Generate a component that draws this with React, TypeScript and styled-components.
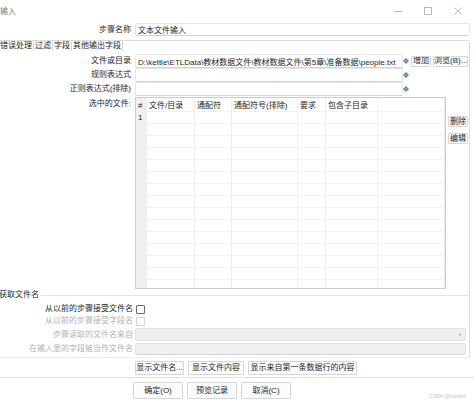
import styled, { createGlobalStyle } from 'styled-components';

const GlobalStyle = createGlobalStyle`
  html, body { margin: 0; padding: 0; background: #fff; }
  body {
    font-family: "Liberation Sans", "Noto Sans CJK SC", sans-serif;
    font-size: 8px;
    color: #1f1f1f;
  }
  * { box-sizing: border-box; }
`;

const columns = ['#', '文件/目录', '通配符', '通配符号(排除)', '要求', '包含子目录', ''];
const rows = Array.from({ length: 16 }, (_, i) => (i === 0 ? '1' : ''));

function App() {
  return (
    <Window>
      <GlobalStyle />
      <TitleBar>
        <Title>输入</Title>
        <Controls>
          <svg width="10" height="10" viewBox="0 0 10 10">
            <line x1="1" y1="5.5" x2="9" y2="5.5" stroke="#999" strokeWidth="0.7" />
          </svg>
          <svg width="10" height="10" viewBox="0 0 10 10">
            <rect x="1.5" y="1.5" width="7" height="7" fill="none" stroke="#999" strokeWidth="0.7" />
          </svg>
          <svg width="10" height="10" viewBox="0 0 10 10">
            <path d="M1.5 1.5 L8.5 8.5 M8.5 1.5 L1.5 8.5" stroke="#999" strokeWidth="0.7" />
          </svg>
        </Controls>
      </TitleBar>

      <StepRow>
        <Label>步骤名称</Label>
        <TextBox $width={335}>文本文件输入</TextBox>
      </StepRow>

      <Folder>
        <TabBar>
          <Tab $first>错误处理</Tab>
          <Tab>过滤</Tab>
          <Tab>字段</Tab>
          <Tab>其他输出字段</Tab>
        </TabBar>

        <FormRow $top={3}>
          <Label>文件或目录</Label>
          <TextBox $width={268}>D:\kettle\ETLData\教材数据文件\教材数据文件\第5章\准备数据\people.txt</TextBox>
          <Gem />
          <ButtonGroup>
            <Btn $width={20}>增加</Btn>
            <Btn $width={35}>浏览(B)...</Btn>
          </ButtonGroup>
        </FormRow>
        <FormRow>
          <Label>规则表达式</Label>
          <TextBox $width={268} />
          <Gem />
        </FormRow>
        <FormRow>
          <Label>正则表达式(排除)</Label>
          <TextBox $width={268} />
          <Gem />
        </FormRow>

        <TableRow>
          <TableLabel>选中的文件:</TableLabel>
          <Table>
            {columns.map((c, i) => (
              <Cell key={'h' + i} $index={i === 0} $head>
                {c}
              </Cell>
            ))}
            {rows.map((r, ri) =>
              columns.map((_, ci) => (
                <Cell key={ri + '-' + ci} $index={ci === 0}>
                  {ci === 0 ? r : ''}
                </Cell>
              ))
            )}
          </Table>
          <SideButtons>
            <Btn $width={20}>删除</Btn>
            <Btn $width={20}>编辑</Btn>
          </SideButtons>
        </TableRow>

        <Group>
          <GroupHead>
            <Legend>获取文件名</Legend>
            <GroupLine />
          </GroupHead>
          <GroupBody>
            <CheckRow>
              <GroupLabel>从以前的步骤接受文件名</GroupLabel>
              <Checkbox />
            </CheckRow>
            <CheckRow>
              <GroupLabel $disabled>从以前的步骤接受字段名</GroupLabel>
              <Checkbox $disabled />
            </CheckRow>
            <ComboRow>
              <GroupLabel $disabled>步骤读取的文件名来自</GroupLabel>
              <Combo>
                <Arrow>▼</Arrow>
              </Combo>
            </ComboRow>
            <InputRow>
              <GroupLabel $disabled>在输入里的字段被当作文件名</GroupLabel>
              <TextBox $width={331} $disabled />
            </InputRow>
          </GroupBody>
        </Group>
      </Folder>

      <ActionRow>
        <Btn $width={49} $height={14}>显示文件名...</Btn>
        <Btn $width={56} $height={14}>显示文件内容</Btn>
        <Btn $width={109} $height={14}>显示来自第一条数据行的内容</Btn>
      </ActionRow>
      <Separator />
      <Footer>
        <Btn $width={50} $height={17}>确定(O)</Btn>
        <Btn $width={50} $height={17}>预览记录</Btn>
        <Btn $width={50} $height={17}>取消(C)</Btn>
      </Footer>
      <Watermark>CSDN @fuzhimi</Watermark>
    </Window>
  );
}

export default App;

const Window = styled.div`
  position: relative;
  width: 474px;
  height: 403px;
  overflow: hidden;
  background: #fff;
`;

const TitleBar = styled.div`
  height: 22px;
  display: flex;
  align-items: center;
  justify-content: space-between;
`;

const Title = styled.span`
  color: #777;
  line-height: 10px;
  margin-top: 1px;
`;

const Controls = styled.div`
  display: flex;
  gap: 20px;
  padding-right: 11px;
`;

const StepRow = styled.div`
  display: flex;
  align-items: center;
  height: 13px;
  margin-top: 1px;
`;

const Label = styled.span<{ $disabled?: boolean }>`
  width: 131px;
  margin-right: 4px;
  flex-shrink: 0;
  text-align: right;
  white-space: nowrap;
  line-height: 10px;
  color: ${(p) => (p.$disabled ? '#b3b3b3' : '#262626')};
`;

const TextBox = styled.div<{ $width: number; $disabled?: boolean }>`
  width: ${(p) => p.$width}px;
  height: 100%;
  flex-shrink: 0;
  border: 1px solid #e6e6e6;
  border-bottom-color: #d4d4d4;
  border-radius: 2px;
  padding-left: 2px;
  display: flex;
  align-items: center;
  white-space: nowrap;
  overflow: hidden;
  color: #1f1f1f;
  background: ${(p) => (p.$disabled ? '#f0f0f0' : '#fff')};
`;

const Folder = styled.div`
  margin-top: 4px;
  margin-right: 4px;
  border-top: 1px solid #dcdcdc;
  border-right: 1px solid #dcdcdc;
  border-top-right-radius: 3px;
  border-bottom: 1px solid #ededed;
`;

const TabBar = styled.div`
  display: flex;
  height: 10px;
`;

const Tab = styled.span<{ $first?: boolean }>`
  padding: 0 1px;
  margin-left: ${(p) => (p.$first ? '-1px' : '0')};
  border-right: 1px solid #d6d6d6;
  line-height: 9px;
  color: #262626;
`;

const FormRow = styled.div<{ $top?: number }>`
  display: flex;
  align-items: center;
  height: 14px;
  margin-top: ${(p) => p.$top ?? 0}px;
`;

const Gem = styled.span`
  width: 4px;
  height: 4px;
  margin-left: 1px;
  flex-shrink: 0;
  transform: rotate(45deg);
  background: #8aa6c6;
  border: 1px solid #5b80aa;
`;

const ButtonGroup = styled.div`
  display: flex;
  gap: 2px;
  margin-left: 3px;
`;

const Btn = styled.button<{ $width?: number; $height?: number }>`
  width: ${(p) => (p.$width ? `${p.$width}px` : 'auto')};
  height: ${(p) => p.$height ?? 11}px;
  padding: 0;
  border: 1px solid #d6d6d6;
  border-radius: 1px;
  background: #fbfbfb;
  font-family: inherit;
  font-size: 8px;
  line-height: 8px;
  color: #262626;
  white-space: nowrap;
  overflow: hidden;
`;

const TableRow = styled.div`
  display: flex;
  align-items: flex-start;
  margin-top: 1px;
`;

const TableLabel = styled(Label)`
  line-height: 12px;
  margin-top: 1px;
`;

const Table = styled.div`
  width: 311px;
  height: 192px;
  flex-shrink: 0;
  border: 1px solid #cbcbcb;
  overflow: hidden;
  display: grid;
  grid-template-columns: 11px 48px 37px 66px 28px 52px 1fr;
  grid-template-rows: 14px;
  grid-auto-rows: 12px;
`;

const Cell = styled.div<{ $index?: boolean; $head?: boolean }>`
  border-right: 1px solid #ededed;
  border-bottom: 1px solid #f2f2f2;
  background: ${(p) => (p.$index ? '#f0f0f0' : '#fff')};
  padding-left: 2px;
  display: flex;
  align-items: ${(p) => (p.$head ? 'flex-start' : 'center')};
  padding-top: ${(p) => (p.$head ? '3px' : '0')};
  white-space: nowrap;
  overflow: hidden;
  line-height: 9px;
  color: #262626;
`;

const SideButtons = styled.div`
  display: flex;
  flex-direction: column;
  gap: 6px;
  margin-left: 2px;
  padding-top: 19px;
`;

const Group = styled.div`
  margin-top: 1px;
`;

const GroupHead = styled.div`
  display: flex;
  align-items: center;
  height: 10px;
`;

const Legend = styled.span`
  margin-left: -1px;
  padding-right: 2px;
  line-height: 10px;
  white-space: nowrap;
  color: #262626;
`;

const GroupLine = styled.div`
  flex: 1;
  height: 1px;
  background: #e4e4e4;
`;

const GroupBody = styled.div`
  padding: 3px 0 2px;
`;

const CheckRow = styled.div`
  display: flex;
  align-items: center;
  height: 12px;
`;

const GroupLabel = styled(Label)`
  width: 133px;
  margin-right: 2px;
`;

const Checkbox = styled.span<{ $disabled?: boolean }>`
  width: 9px;
  height: 9px;
  margin-left: 1px;
  border: 1px solid ${(p) => (p.$disabled ? '#d4d4d4' : '#6a6a6a')};
  border-radius: 1px;
  background: #fff;
`;

const ComboRow = styled.div`
  display: flex;
  align-items: center;
  height: 13px;
  margin-top: 1px;
`;

const Combo = styled.div`
  width: 331px;
  height: 100%;
  border: 1px solid #e2e2e2;
  border-radius: 2px;
  background: #efefef;
  display: flex;
  align-items: center;
  justify-content: flex-end;
  padding-right: 3px;
`;

const Arrow = styled.span`
  font-size: 4px;
  color: #9a9a9a;
`;

const InputRow = styled.div`
  display: flex;
  align-items: center;
  height: 12px;
  margin-top: 2px;
`;

const ActionRow = styled.div`
  display: flex;
  gap: 4px;
  padding-left: 135px;
  margin-top: 3px;
`;

const Separator = styled.div`
  height: 1px;
  margin-top: 2px;
  background: #e0e0e0;
`;

const Footer = styled.div`
  display: flex;
  gap: 4px;
  padding-left: 133px;
  margin-top: 4px;
`;

const Watermark = styled.span`
  position: absolute;
  right: 8px;
  bottom: 4px;
  font-size: 5px;
  color: #c2c2c2;
`;
